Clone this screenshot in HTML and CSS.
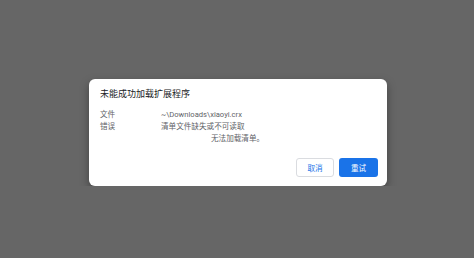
FILE: index.html
```html
<!DOCTYPE html>
<html lang="zh">
<head>
    <title>扩展程序</title>
    <link rel="stylesheet" href="styles.css">
</head>
<body>
    <div class="dialog">
        <h1 class="title">未能成功加载扩展程序</h1>
        <div class="details">
            <span class="label">文件</span>
            <span class="value">~\Downloads\xiaoyi.crx</span>
            <span class="label">错误</span>
            <span class="value">清单文件缺失或不可读取</span>
            <span class="label"></span>
            <span class="value note">无法加载清单。</span>
        </div>
        <div class="actions">
            <button class="btn cancel">取消</button>
            <button class="btn retry">重试</button>
        </div>
    </div>
</body>
</html>
```

FILE: styles.css
```css
body {
margin: 0;
background-color: #666666;
font-family: Roboto, "Noto Sans CJK SC", sans-serif;
}

.dialog {
box-sizing: border-box;
width: 298px;
margin: 79px 0 0 89px;
padding: 8px 9px 9px 11px;
background-color: #ffffff;
border-radius: 6px;
box-shadow: 0 4px 10px rgba(0, 0, 0, 0.35);
}

.title {
margin: 0;
font-size: 9px;
line-height: 14px;
font-weight: normal;
color: #202124;
}

.details {
display: grid;
grid-template-columns: 61px 1fr;
margin-top: 8px;
font-size: 7.6px;
line-height: 12px;
color: #5f6368;
}

.note {
padding-left: 50px;
}

.actions {
display: flex;
justify-content: flex-end;
gap: 5px;
margin-top: 13px;
}

.btn {
font-family: Roboto, "Noto Sans CJK SC", sans-serif;
font-size: 7.6px;
height: 19px;
width: 38px;
padding: 0;
border-radius: 3px;
cursor: pointer;
}

.cancel {
background-color: #ffffff;
color: #1a73e8;
border: 1px solid #dadce0;
}

.retry {
width: 39px;
background-color: #1a73e8;
color: #ffffff;
border: none;
}
```
